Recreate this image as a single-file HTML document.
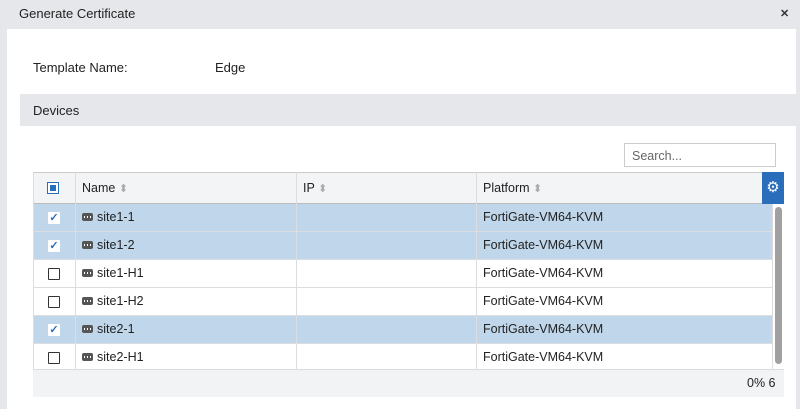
<!DOCTYPE html>
<html><head><style>
body{margin:0;width:800px;height:409px;background:#e6e7eb;font-family:"Liberation Sans",sans-serif;font-size:13px;color:#222;position:relative;overflow:hidden}
.abs{position:absolute}
.title{left:19px;top:6px;font-size:13px}
.main{left:7px;top:29px;width:789px;height:380px;background:#fff}
.dev{left:20px;top:94px;width:777px;height:32px;background:#e6e7eb}
.row{position:absolute;left:33px;width:739px;height:28px;border-bottom:1px solid #dcdde0;box-sizing:border-box}
.sel{background:#c0d6ea}
.cell{position:absolute;top:0;line-height:27px;font-size:12.5px}
.cb{position:absolute;left:15px;top:8px;width:12px;height:12px;border:1.5px solid #333;box-sizing:border-box;background:#fff;border-radius:1px}
.chk{border:none;color:#2a6ebb;font-size:11px;line-height:12px;text-align:center;font-weight:bold}
.ic{display:inline-block;width:11px;height:8px;background:#555;border-radius:2px;vertical-align:0;margin-right:4px;position:relative}
.ic:after{content:"";position:absolute;left:2px;top:3px;width:7px;height:2px;background:repeating-linear-gradient(90deg,#fff 0 1px,transparent 1px 3px)}
.sort{color:#aaa;font-size:11px}
</style></head><body>
<div class="abs title">Generate Certificate</div>
<div class="abs" style="left:780px;top:7px;font-size:11px;font-weight:bold;color:#333">✕</div>
<div class="abs main"></div>
<div class="abs" style="left:33px;top:60px">Template Name:</div>
<div class="abs" style="left:215px;top:60px">Edge</div>
<div class="abs dev"></div>
<div class="abs" style="left:33px;top:103px">Devices</div>
<div class="abs" style="left:624px;top:143px;width:152px;height:24px;border:1px solid #ccc;box-sizing:border-box;color:#666;padding:5px 7px;font-size:12.5px">Search...</div>
<div class="abs" style="left:33px;top:172px;width:729px;height:32px;background:#f3f4f6;border-top:1px solid #ccc;border-bottom:1px solid #bbb;box-sizing:border-box"></div>
<div class="abs" style="left:762px;top:172px;width:22px;height:32px;background:#2a6ebb;color:#fff;text-align:center;line-height:32px;font-size:15px">⚙</div>
<div class="abs" style="left:47px;top:182px;width:12px;height:12px;border:1px solid #2a6ebb;box-sizing:border-box;background:#fff"><div style="margin:2px;width:6px;height:6px;background:#2a6ebb"></div></div>
<div class="abs" style="left:82px;top:181px;font-size:12.5px">Name <span class="sort">⬍</span></div>
<div class="abs" style="left:303px;top:181px;font-size:12.5px">IP <span class="sort">⬍</span></div>
<div class="abs" style="left:483px;top:181px;font-size:12.5px">Platform <span class="sort">⬍</span></div>
<div class="abs" style="left:75px;top:172px;width:1px;height:197px;background:#dcdde0;z-index:2"></div>
<div class="abs" style="left:296px;top:172px;width:1px;height:197px;background:#dcdde0;z-index:2"></div>
<div class="abs" style="left:476px;top:172px;width:1px;height:197px;background:#dcdde0;z-index:2"></div>
<div class="abs" style="left:33px;top:172px;width:1px;height:197px;background:#dcdde0;z-index:2"></div>

<div class="row sel" style="top:204px"><div class="cb chk">✓</div><div class="cell" style="left:49px"><span class="ic"></span>site1-1</div><div class="cell" style="left:450px">FortiGate-VM64-KVM</div></div>
<div class="row sel" style="top:232px"><div class="cb chk">✓</div><div class="cell" style="left:49px"><span class="ic"></span>site1-2</div><div class="cell" style="left:450px">FortiGate-VM64-KVM</div></div>
<div class="row" style="top:260px"><div class="cb"></div><div class="cell" style="left:49px"><span class="ic"></span>site1-H1</div><div class="cell" style="left:450px">FortiGate-VM64-KVM</div></div>
<div class="row" style="top:288px"><div class="cb"></div><div class="cell" style="left:49px"><span class="ic"></span>site1-H2</div><div class="cell" style="left:450px">FortiGate-VM64-KVM</div></div>
<div class="row sel" style="top:316px"><div class="cb chk">✓</div><div class="cell" style="left:49px"><span class="ic"></span>site2-1</div><div class="cell" style="left:450px">FortiGate-VM64-KVM</div></div>
<div class="row" style="top:344px;height:26px"><div class="cb"></div><div class="cell" style="left:49px"><span class="ic"></span>site2-H1</div><div class="cell" style="left:450px">FortiGate-VM64-KVM</div></div>
<div class="abs" style="left:772px;top:204px;width:12px;height:165px;background:#fff;border-left:1px solid #ddd;box-sizing:border-box"></div>
<div class="abs" style="left:775px;top:207px;width:7px;height:157px;background:#a0a0a0;border-radius:4px"></div>
<div class="abs" style="left:33px;top:369px;width:751px;height:28px;background:#f2f3f5;border-top:1px solid #ddd;box-sizing:border-box"></div>
<div class="abs" style="left:747px;top:376px;font-size:12.5px">0% 6</div>
</body></html>
